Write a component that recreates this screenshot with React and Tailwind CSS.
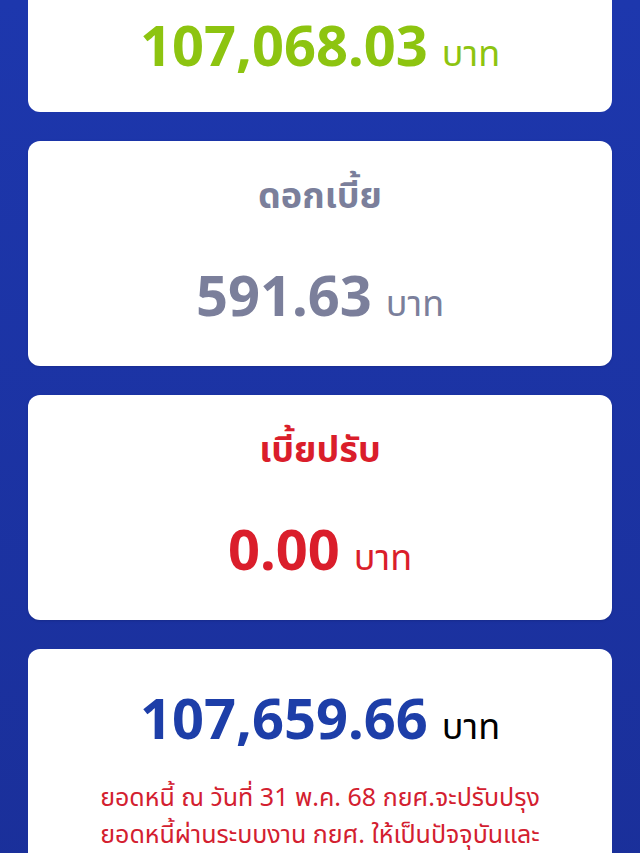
import React from 'react';

const font = { fontFamily: '"Noto Sans", "Noto Sans Thai", "Liberation Sans", sans-serif' };

const Amount = ({ value, color, unitColor }) => (
  <div className="flex items-baseline justify-center gap-[14px]">
    <span className={`text-[56px] font-bold leading-[56px] ${color}`}>{value}</span>
    <span className={`text-[36px] leading-[40px] ${unitColor}`}>บาท</span>
  </div>
);

const Card = ({ title, titleColor, value, color }) => (
  <div className="h-[225px] rounded-xl bg-white flex flex-col items-center pt-[32px] gap-[49px] shadow-sm">
    <h2 className={`text-[36px] font-bold leading-[44px] ${titleColor}`}>{title}</h2>
    <Amount value={value} color={color} unitColor={color} />
  </div>
);

export default function App() {
  return (
    <div style={font} className="min-h-screen w-full bg-gradient-to-b from-[#1d37ad] to-[#1a2f99] px-[28px] pb-10 flex flex-col gap-[29px]">
      <div className="h-[112px] rounded-b-xl bg-white flex justify-center pt-[16px]">
        <Amount value="107,068.03" color="text-[#8dc410]" unitColor="text-[#8dc410]" />
      </div>

      <Card title="ดอกเบี้ย" titleColor="text-[#7b7f9b]" value="591.63" color="text-[#7b7f9b]" />
      <Card title="เบี้ยปรับ" titleColor="text-[#da1e2b]" value="0.00" color="text-[#da1e2b]" />

      <div className="rounded-xl bg-white flex flex-col items-center pt-[40px] pb-8">
        <Amount value="107,659.66" color="text-[#1d3ea8]" unitColor="text-black" />
        <p className="mt-[32px] text-[25px] leading-[37px] text-[#d3202f] text-center px-6">
          ยอดหนี้ ณ วันที่ 31 พ.ค. 68 กยศ.จะปรับปรุง<br />
          ยอดหนี้ผ่านระบบงาน กยศ. ให้เป็นปัจจุบันและ
        </p>
      </div>
    </div>
  );
}
